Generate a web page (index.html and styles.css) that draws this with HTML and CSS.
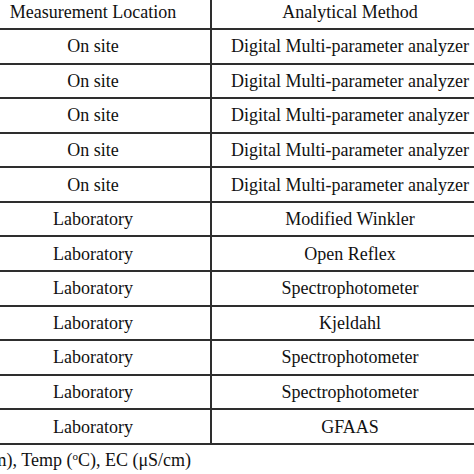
FILE: index.html
```html
<!DOCTYPE html>
<html lang="en">
<head>
<meta charset="utf-8">
<title>Measurement methods</title>
<link rel="stylesheet" href="styles.css">
</head>
<body>
<div class="page">
  <div class="table">
    <div class="row head"><div class="cell loc">Measurement Location</div><div class="cell">Analytical Method</div></div>
    <div class="row"><div class="cell loc">On site</div><div class="cell">Digital Multi-parameter analyzer</div></div>
    <div class="row"><div class="cell loc">On site</div><div class="cell">Digital Multi-parameter analyzer</div></div>
    <div class="row"><div class="cell loc">On site</div><div class="cell">Digital Multi-parameter analyzer</div></div>
    <div class="row"><div class="cell loc">On site</div><div class="cell">Digital Multi-parameter analyzer</div></div>
    <div class="row"><div class="cell loc">On site</div><div class="cell">Digital Multi-parameter analyzer</div></div>
    <div class="row"><div class="cell loc">Laboratory</div><div class="cell">Modified Winkler</div></div>
    <div class="row"><div class="cell loc">Laboratory</div><div class="cell">Open Reflex</div></div>
    <div class="row"><div class="cell loc">Laboratory</div><div class="cell">Spectrophotometer</div></div>
    <div class="row"><div class="cell loc">Laboratory</div><div class="cell">Kjeldahl</div></div>
    <div class="row"><div class="cell loc">Laboratory</div><div class="cell">Spectrophotometer</div></div>
    <div class="row"><div class="cell loc">Laboratory</div><div class="cell">Spectrophotometer</div></div>
    <div class="row"><div class="cell loc">Laboratory</div><div class="cell">GFAAS</div></div>
  </div>
  <p class="note">Depth (m), Temp (<sup>o</sup>C), EC (μS/cm)</p>
</div>
</body>
</html>
```

FILE: styles.css
```css
html, body {
  margin: 0;
  padding: 0;
  background: #ffffff;
}
body {
  width: 474px;
  height: 474px;
  overflow: hidden;
  font-family: "Liberation Serif", "Times New Roman", serif;
  font-size: 18px;
  color: #111111;
}
.page {
  margin-left: -24px;
  width: 512px;
}
.table {
  margin-top: -4.6px;
}
.row {
  display: grid;
  grid-template-columns: 236px 1fr;
  height: 34.58px;
  box-sizing: border-box;
  border-bottom: 2px solid #2e2e2e;
}
.cell {
  display: flex;
  align-items: center;
  justify-content: center;
  white-space: nowrap;
  line-height: 20px;
}
.loc {
  border-right: 2px solid #2e2e2e;
}
.note {
  margin: 0 0 0 -38px;
  padding-top: 4px;
  line-height: 22px;
  white-space: nowrap;
}
.note sup {
  font-size: 11px;
  vertical-align: 6px;
  line-height: 0;
}
```
